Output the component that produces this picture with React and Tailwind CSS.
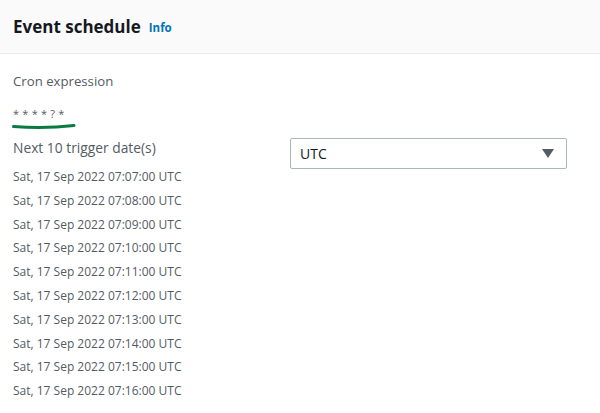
const dates = [
  "Sat, 17 Sep 2022 07:07:00 UTC",
  "Sat, 17 Sep 2022 07:08:00 UTC",
  "Sat, 17 Sep 2022 07:09:00 UTC",
  "Sat, 17 Sep 2022 07:10:00 UTC",
  "Sat, 17 Sep 2022 07:11:00 UTC",
  "Sat, 17 Sep 2022 07:12:00 UTC",
  "Sat, 17 Sep 2022 07:13:00 UTC",
  "Sat, 17 Sep 2022 07:14:00 UTC",
  "Sat, 17 Sep 2022 07:15:00 UTC",
  "Sat, 17 Sep 2022 07:16:00 UTC",
];

export default function App() {
  return (
    <div className="w-[600px] h-[413px] overflow-hidden bg-white font-['Open_Sans',sans-serif]">
      <div className="h-[54px] bg-[#fafafa] border-b border-[#e9ebed] px-[13px] flex items-center gap-[8px]">
        <h2 className="text-[17px] font-bold text-[#16191f] leading-none">Event schedule</h2>
        <a className="text-[11.5px] font-bold text-[#0073bb] leading-none mt-[2px]">Info</a>
      </div>
      <div className="px-[13px] pt-[17px]">
        <div className="text-[13.2px] text-[#545b64] leading-[20px]">Cron expression</div>
        <div className="relative mt-[15px] w-fit">
          <div className="text-[11px] text-[#545b64] leading-[16px] tracking-[0.2px]">* * * * ? *</div>
          <svg className="absolute left-[-1px] top-[16px]" width="64" height="8" viewBox="0 0 64 8">
            <path d="M1.5 4.5 C 20 6, 45 5.5, 62 3.5" stroke="#0b7a42" strokeWidth="3" fill="none" strokeLinecap="round" />
          </svg>
        </div>
        <div className="grid grid-cols-[277px_277px] mt-[16px]">
          <div>
            <div className="text-[13.8px] text-[#545b64] leading-[20px]">Next 10 trigger date(s)</div>
            <ul className="mt-[7px]">
              {dates.map((d) => (
                <li key={d} className="text-[12px] text-[#545b64] leading-[23.8px]">
                  {d}
                </li>
              ))}
            </ul>
          </div>
          <div>
            <div className="h-[31px] border border-[#aab7b8] rounded-[2px] flex items-center justify-between pl-[9px] pr-[12px]">
              <span className="text-[14px] text-[#16191f]">UTC</span>
              <svg width="12" height="10" viewBox="0 0 12 10">
                <path d="M0 0 H12 L6 9 Z" fill="#545b64" />
              </svg>
            </div>
          </div>
        </div>
      </div>
    </div>
  );
}
